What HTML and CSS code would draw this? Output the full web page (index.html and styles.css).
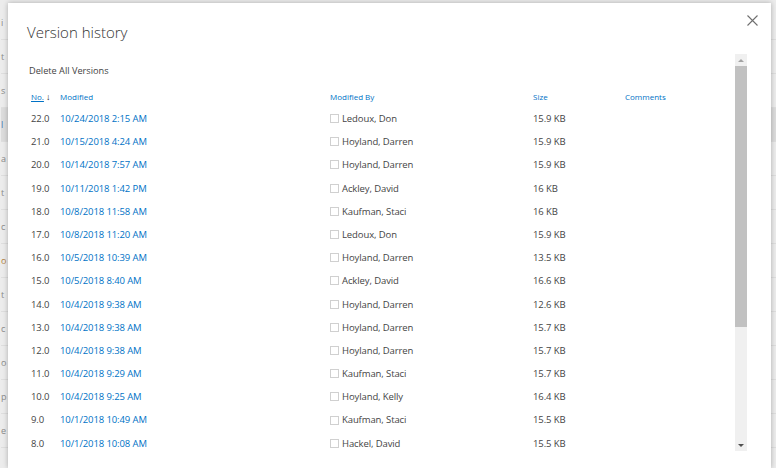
FILE: index.html
```html
<!DOCTYPE html>
<html>
<head>
<meta charset="utf-8">
<link rel="stylesheet" href="styles.css">
</head>
<body>
<div class="backdrop">
  <div class="page-line">i</div>
  <div class="page-line">t</div>
  <div class="page-line">s</div>
  <div class="page-line hl">l</div>
  <div class="page-line">a</div>
  <div class="page-line">t</div>
  <div class="page-line">c</div>
  <div class="page-line link">o</div>
  <div class="page-line">t</div>
  <div class="page-line">c</div>
  <div class="page-line">o</div>
  <div class="page-line">p</div>
  <div class="page-line">e</div>
</div>
<div class="dialog">
  <div class="dialog-head">
    <h1 class="title">Version history</h1>
    <button class="close" aria-label="Close">
      <svg width="11" height="11" viewBox="0 0 11 11"><path d="M0.5 0.5 L10.5 10.5 M10.5 0.5 L0.5 10.5" stroke="#6f6f6f" stroke-width="1.1" fill="none"/></svg>
    </button>
  </div>
  <div class="scroll">
    <div class="content">
      <div class="action">Delete All Versions</div>
      <div class="grid head">
        <div class="hcell"><span class="sorted">No.</span><span class="arrow">&#8595;</span></div>
        <div class="hcell">Modified</div>
        <div class="hcell">Modified By</div>
        <div class="hcell">Size</div>
        <div class="hcell">Comments</div>
      </div>
      <div id="rows"></div>
    </div>
    <div class="scrollbar">
      <div class="sb-btn up"><span class="tri-up"></span></div>
      <div class="sb-thumb"></div>
      <div class="sb-track"></div>
      <div class="sb-btn down"><span class="tri-down"></span></div>
    </div>
  </div>
</div>
<script src="app.js"></script>
</body>
</html>
```

FILE: app.js
```js
const data = [
  ["22.0","10/24/2018 2:15 AM","Ledoux, Don","15.9 KB"],
  ["21.0","10/15/2018 4:24 AM","Hoyland, Darren","15.9 KB"],
  ["20.0","10/14/2018 7:57 AM","Hoyland, Darren","15.9 KB"],
  ["19.0","10/11/2018 1:42 PM","Ackley, David","16 KB"],
  ["18.0","10/8/2018 11:58 AM","Kaufman, Staci","16 KB"],
  ["17.0","10/8/2018 11:20 AM","Ledoux, Don","15.9 KB"],
  ["16.0","10/5/2018 10:39 AM","Hoyland, Darren","13.5 KB"],
  ["15.0","10/5/2018 8:40 AM","Ackley, David","16.6 KB"],
  ["14.0","10/4/2018 9:38 AM","Hoyland, Darren","12.6 KB"],
  ["13.0","10/4/2018 9:38 AM","Hoyland, Darren","15.7 KB"],
  ["12.0","10/4/2018 9:38 AM","Hoyland, Darren","15.7 KB"],
  ["11.0","10/4/2018 9:29 AM","Kaufman, Staci","15.7 KB"],
  ["10.0","10/4/2018 9:25 AM","Hoyland, Kelly","16.4 KB"],
  ["9.0","10/1/2018 10:49 AM","Kaufman, Staci","15.5 KB"],
  ["8.0","10/1/2018 10:08 AM","Hackel, David","15.5 KB"]
];
const rows = document.getElementById("rows");
for (const [no, mod, by, size] of data) {
  const r = document.createElement("div");
  r.className = "grid row";
  r.innerHTML =
    '<div class="cell">' + no + '</div>' +
    '<div class="cell link">' + mod + '</div>' +
    '<div class="cell"><span class="chk"></span>' + by + '</div>' +
    '<div class="cell">' + size + '</div>' +
    '<div class="cell"></div>';
  rows.appendChild(r);
}
```

FILE: styles.css
```css
html, body {
  margin: 0;
  padding: 0;
  height: 100%;
  overflow: hidden;
}
body {
  background: #ececec;
  font-family: "Segoe UI", "Open Sans", "Noto Sans", sans-serif;
  position: relative;
}
.backdrop {
  padding-top: 6px;
  padding-left: 1px;
  color: #8a8a8a;
  font-size: 9px;
  font-family: "Open Sans", sans-serif;
}
.page-line {
  height: 33px;
  line-height: 33px;
  border-bottom: 1px solid #dedede;
}
.page-line.hl { background: #dcdcdc; color: #4a7fb5; }
.page-line.link { color: #b08040; }

.dialog {
  position: absolute;
  left: 8px;
  top: 3px;
  width: 763px;
  height: 465px;
  background: #fff;
  box-shadow: 0 0 5px rgba(0,0,0,0.28);
  display: flex;
  flex-direction: column;
}
.dialog-head {
  display: flex;
  justify-content: space-between;
  align-items: flex-start;
  height: 51px;
}
.title {
  margin: 18px 0 0 19px;
  font-weight: 300;
  font-size: 15px;
  line-height: 22px;
  color: #333;
}
.close {
  border: 0;
  background: none;
  padding: 0;
  margin: 12px 13px 0 0;
  width: 11px;
  height: 11px;
  display: flex;
}
.scroll {
  display: flex;
  height: 397px;
  padding-right: 24px;
}
.content {
  flex: 1;
  padding-left: 21px;
  overflow: hidden;
  color: #444;
  font-size: 9.5px;
  letter-spacing: -0.1px;
}
.action {
  margin-top: 9px;
  height: 16px;
  line-height: 16px;
  font-size: 9.2px;
  letter-spacing: 0;
  color: #444;
}
.grid {
  display: grid;
  grid-template-columns: 29px 270px 203px 92px 1fr;
}
.head {
  margin-top: 10px;
  height: 16px;
  line-height: 16px;
  padding-left: 2px;
}
.hcell {
  font-size: 8px;
  letter-spacing: 0;
  color: #0072c6;
  white-space: nowrap;
}
.sorted {
  text-decoration: underline;
}
.arrow {
  color: #222;
  font-size: 9px;
  margin-left: 2px;
}
#rows { padding-left: 2px; margin-top: 2px; }
.row {
  height: 23.2px;
  line-height: 23.2px;
}
.cell {
  white-space: nowrap;
  display: flex;
  align-items: center;
}
.cell.link { color: #0072c6; }
.chk {
  width: 7px;
  height: 7px;
  border: 1px solid #d0d0d0;
  margin-right: 3px;
  flex: none;
}
.scrollbar {
  width: 12px;
  display: flex;
  flex-direction: column;
  background: #f0f0f0;
}
.sb-btn {
  height: 12px;
  display: flex;
  align-items: center;
  justify-content: center;
  flex: none;
}
.tri-up {
  width: 0; height: 0;
  border-left: 3px solid transparent;
  border-right: 3px solid transparent;
  border-bottom: 3px solid #a3a3a3;
}
.tri-down {
  width: 0; height: 0;
  border-left: 3px solid transparent;
  border-right: 3px solid transparent;
  border-top: 3px solid #505050;
}
.sb-thumb {
  height: 261px;
  background: #c1c1c1;
  flex: none;
}
.sb-track { flex: 1; }
```
